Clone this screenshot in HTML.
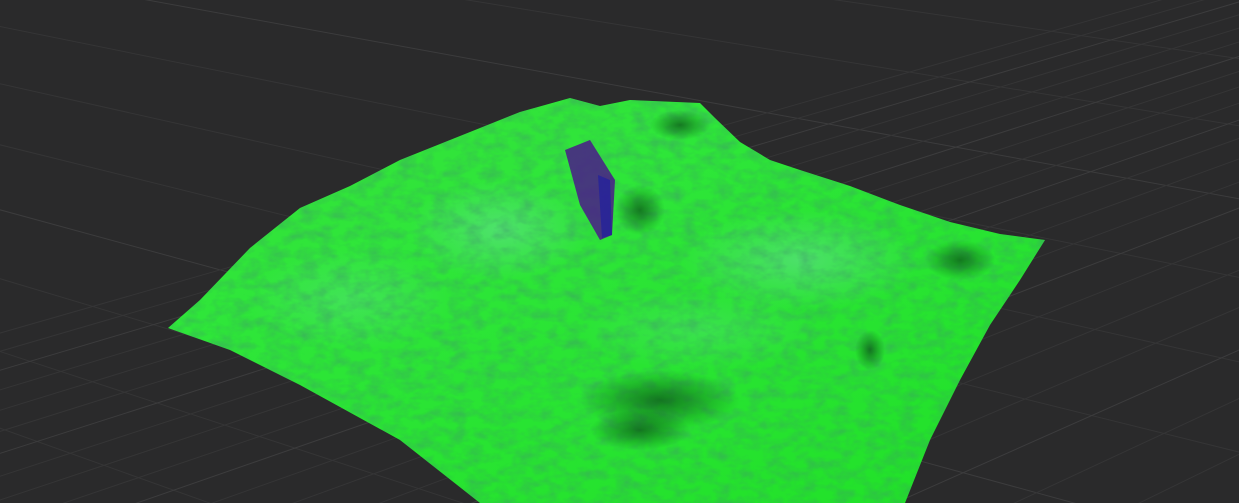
<!DOCTYPE html>
<html><head><meta charset="utf-8"><style>
html,body{margin:0;padding:0;background:#2a2a2b;overflow:hidden;width:1239px;height:503px}
svg{display:block;position:absolute;left:0;top:0}
script{display:none}
</style></head><body>
<svg width="1239" height="503" viewBox="0 0 1239 503" xmlns="http://www.w3.org/2000/svg">
<defs>
<linearGradient id="g1" x1="0" y1="0" x2="1" y2="1">
<stop offset="0" stop-color="#3cd83c"/><stop offset="0.4" stop-color="#2fe63a"/><stop offset="1" stop-color="#1ee025"/>
</linearGradient>
<radialGradient id="sh1" cx="0.5" cy="0.5" r="0.5"><stop offset="0" stop-color="#0a4a18" stop-opacity="0.7"/><stop offset="1" stop-color="#0a4a18" stop-opacity="0"/></radialGradient>
<radialGradient id="hl" cx="0.5" cy="0.5" r="0.5"><stop offset="0" stop-color="#6fdca0" stop-opacity="0.5"/><stop offset="1" stop-color="#6fdca0" stop-opacity="0"/></radialGradient>
<filter id="noise" x="0" y="0" width="100%" height="100%">
<feTurbulence type="fractalNoise" baseFrequency="0.06 0.1" numOctaves="3" seed="4"/>
<feColorMatrix values="0 0 0 0 0.05  0 0 0 0 0.3  0 0 0 0 0.15  0 0 0 -1.6 1.0"/>
</filter>
<clipPath id="cp"><polygon points="168,328 200,300 250,248 300,208 350,186 400,160 450,140 520,112 570,98 600,106 630,100 700,103 715,118 740,142 770,160 800,170 850,186 900,205 950,222 1000,234 1045,240 1020,280 990,325 960,380 930,440 905,503 480,503 400,440 300,385 230,350"/></clipPath>
</defs>
<rect width="1239" height="503" fill="#2a2a2b"/>
<g id="grid" stroke="#353536" stroke-width="1" fill="none"></g>
<g clip-path="url(#cp)">
<rect width="1239" height="503" fill="url(#g1)"/>
<ellipse cx="500" cy="230" rx="90" ry="50" fill="url(#hl)"/>
<ellipse cx="800" cy="260" rx="120" ry="50" fill="url(#hl)"/>
<ellipse cx="350" cy="300" rx="100" ry="50" fill="url(#hl)" opacity="0.6"/>
<ellipse cx="700" cy="330" rx="120" ry="40" fill="url(#hl)" opacity="0.5"/>
<rect width="1239" height="503" filter="url(#noise)" opacity="0.55"/>
<path d="M565,150 L590,140 L615,180 L612,235 L600,240 L580,205 Z" fill="#4a1a8a" opacity="0.85"/>
<path d="M598,175 L610,180 L612,235 L602,238 Z" fill="#2020a0" opacity="0.7"/>
<ellipse cx="640" cy="210" rx="25" ry="25" fill="url(#sh1)"/>
<ellipse cx="680" cy="125" rx="30" ry="15" fill="url(#sh1)"/>
<ellipse cx="960" cy="260" rx="35" ry="20" fill="url(#sh1)"/>
<ellipse cx="660" cy="400" rx="80" ry="30" fill="url(#sh1)"/>
<ellipse cx="640" cy="430" rx="50" ry="20" fill="url(#sh1)"/>
<ellipse cx="870" cy="350" rx="15" ry="20" fill="url(#sh1)"/>
</g>
</svg>
<script>
var g=document.getElementById('grid'),ns='http://www.w3.org/2000/svg';
function L(x1,y1,x2,y2,c){var l=document.createElementNS(ns,'line');l.setAttribute('x1',x1);l.setAttribute('y1',y1);l.setAttribute('x2',x2);l.setAttribute('y2',y2);if(c)l.setAttribute('stroke',c);g.appendChild(l);}
var vA=[-2600,-500];
for(var i=-6;i<20;i++){var yy=-40+i*55+(i>0?i*i*3:0); L(vA[0],vA[1],1400,yy,i%4==0?'#3c3c3d':null);}
var vB=[3600,-700];
for(var j=-10;j<20;j++){var xx=-200+j*80+(j>0?j*j*3:0); L(vB[0],vB[1],xx,620,j%4==0?'#3c3c3d':null);}
</script>
</body></html>
